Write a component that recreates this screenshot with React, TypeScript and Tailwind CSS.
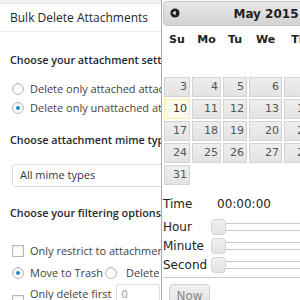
import { ReactNode } from "react";

const Radio = ({ checked, className = "" }: { checked?: boolean; className?: string }) => (
  <span
    className={`flex h-[12px] w-[12px] shrink-0 items-center justify-center rounded-full border border-[#b4b9be] bg-white shadow-[inset_0_1px_2px_rgba(0,0,0,0.1)] ${className}`}
  >
    {checked && <span className="h-[4px] w-[4px] rounded-full bg-[#1e8cbe]" />}
  </span>
);

const Checkbox = ({ className = "" }: { className?: string }) => (
  <span
    className={`block h-[12px] w-[12px] shrink-0 border border-[#b4b9be] bg-white shadow-[inset_0_1px_2px_rgba(0,0,0,0.1)] ${className}`}
  />
);

const Row = ({ children, className }: { children: ReactNode; className: string }) => (
  <div className={`flex h-[16px] items-center whitespace-nowrap ${className}`}>{children}</div>
);

const dayNames = ["Su", "Mo", "Tu", "We", "Th", "Fr", "Sa"];
const weeks: (number | null)[][] = [
  [null, null, null, null, null, 1, 2],
  [3, 4, 5, 6, 7, 8, 9],
  [10, 11, 12, 13, 14, 15, 16],
  [17, 18, 19, 20, 21, 22, 23],
  [24, 25, 26, 27, 28, 29, 30],
  [31, null, null, null, null, null, null],
];

const Slider = ({ label }: { label: string }) => (
  <div className="flex h-[19px] items-center">
    <span className="w-[47px]">{label}</span>
    <div className="relative ml-[8px] h-[8px] flex-1 rounded-[4px] border border-[#c8c8c8] bg-white">
      <span className="absolute left-[-8px] top-[-5px] h-[16px] w-[15px] rounded-[4px] border border-[#d3d3d3] bg-linear-to-b from-[#f0f0f0] to-[#e2e2e2]" />
    </div>
  </div>
);

const DatePicker = () => (
  <div className="absolute left-[161px] top-[-1px] w-[208px] border border-[#aaa] bg-white pl-[1px] pt-[1px] font-['DejaVu_Sans',Verdana,sans-serif] text-[#222]">
    <div className="relative flex h-[25px] items-center justify-center rounded-[4px] border border-[#c6c6c6] bg-linear-to-b from-[#e9e9e9] to-[#d2d2d2] text-[12px] font-bold">
      <svg className="absolute left-[6px] top-[6px]" width="10" height="10" viewBox="0 0 10 10">
        <circle cx="5" cy="5" r="4.6" fill="#222" />
        <path d="M2.4 5 L5.6 2.8 L5.6 7.2 Z" fill="#fff" />
      </svg>
      <span className="pl-[1px]">May 2015</span>
    </div>
    <div className="grid grid-cols-[28px_31px_26px_35px_32px_32px_32px] text-[11px]">
      {dayNames.map((d) => (
        <div key={d} className="flex h-[28px] items-center justify-center font-bold">
          {d}
        </div>
      ))}
      {weeks.flat().map((d, i) => (
        <div key={i} className="h-[22px] p-[1px]">
          {d !== null && (
            <div
              className={`flex h-full items-center justify-end border pr-[2px] ${
                d === 10
                  ? "border-[#fcefa1] bg-[#fbf9ee] text-[#363636]"
                  : "border-[#d3d3d3] bg-linear-to-b from-[#eeeeee] to-[#e3e3e3] text-[#555]"
              }`}
            >
              {d}
            </div>
          )}
        </div>
      ))}
    </div>
    <div className="mt-[8px] text-[12px] text-[#222]">
      <div className="flex h-[19px] items-center">
        <span className="w-[54px]">Time</span>
        <span>00:00:00</span>
      </div>
      <div className="mt-[4px] pr-[4px]">
        <Slider label="Hour" />
        <Slider label="Minute" />
        <Slider label="Second" />
      </div>
    </div>
    <div className="mt-[3px] border-t border-[#ccc] pl-[6px] pt-[6px]">
      <button className="h-[24px] w-[41px] rounded-[4px] border border-[#d3d3d3] bg-linear-to-b from-[#f0f0f0] to-[#e2e2e2] text-[12px] text-[#888]">
        Now
      </button>
    </div>
  </div>
);

const App = () => {
  return (
    <div className="relative h-[300px] w-[300px] overflow-hidden bg-[#f1f1f1] pt-[3px] font-['Open_Sans','Noto_Sans',sans-serif] text-[11px] text-[#444]">
      <div className="h-full border-t border-[#e5e5e5] bg-white">
        <div className="flex h-[28px] items-center border-b border-[#eee] pl-[10px] text-[12px] text-[#23282d]">
          Bulk Delete Attachments
        </div>
        <div className="pl-[10px]">
          <Row className="mt-[20px] text-[10.8px] font-semibold text-[#23282d]">Choose your attachment settings</Row>
          <Row className="mt-[13px] gap-[6px] pl-[2px]">
            <Radio />
            Delete only attached attachments
          </Row>
          <Row className="mt-[3px] gap-[6px] pl-[2px]">
            <Radio checked />
            Delete only unattached attachments
          </Row>
          <Row className="mt-[16px] text-[10.8px] font-semibold text-[#23282d]">Choose attachment mime type</Row>
          <div className="ml-[2px] mt-[16px] flex h-[23px] items-center rounded-[3px] border border-[#ddd] pl-[7px] text-[#32373c]">
            All mime types
          </div>
          <Row className="mt-[18px] text-[10.8px] font-semibold text-[#23282d]">Choose your filtering options</Row>
          <Row className="mt-[22px] gap-[6px] pl-[2px]">
            <Checkbox />
            Only restrict to attachments
          </Row>
          <Row className="mt-[6px] gap-[6px] pl-[2px]">
            <Radio checked />
            <span>Move to Trash</span>
            <Radio className="ml-[-4px]" />
            <span className="ml-[3px]">Delete permanently</span>
          </Row>
          <div className="mt-[3px] flex h-[20px] items-center gap-[6px] whitespace-nowrap pl-[2px]">
            <Checkbox className="mt-[14px]" />
            <span>Only delete first</span>
            <span className="ml-[-1px] flex h-[20px] w-[44px] items-center rounded-[2px] border border-[#ddd] pl-[4px] text-[#999]">
              0
            </span>
            <span>attachments</span>
          </div>
        </div>
      </div>
      <DatePicker />
    </div>
  );
};

export default App;
